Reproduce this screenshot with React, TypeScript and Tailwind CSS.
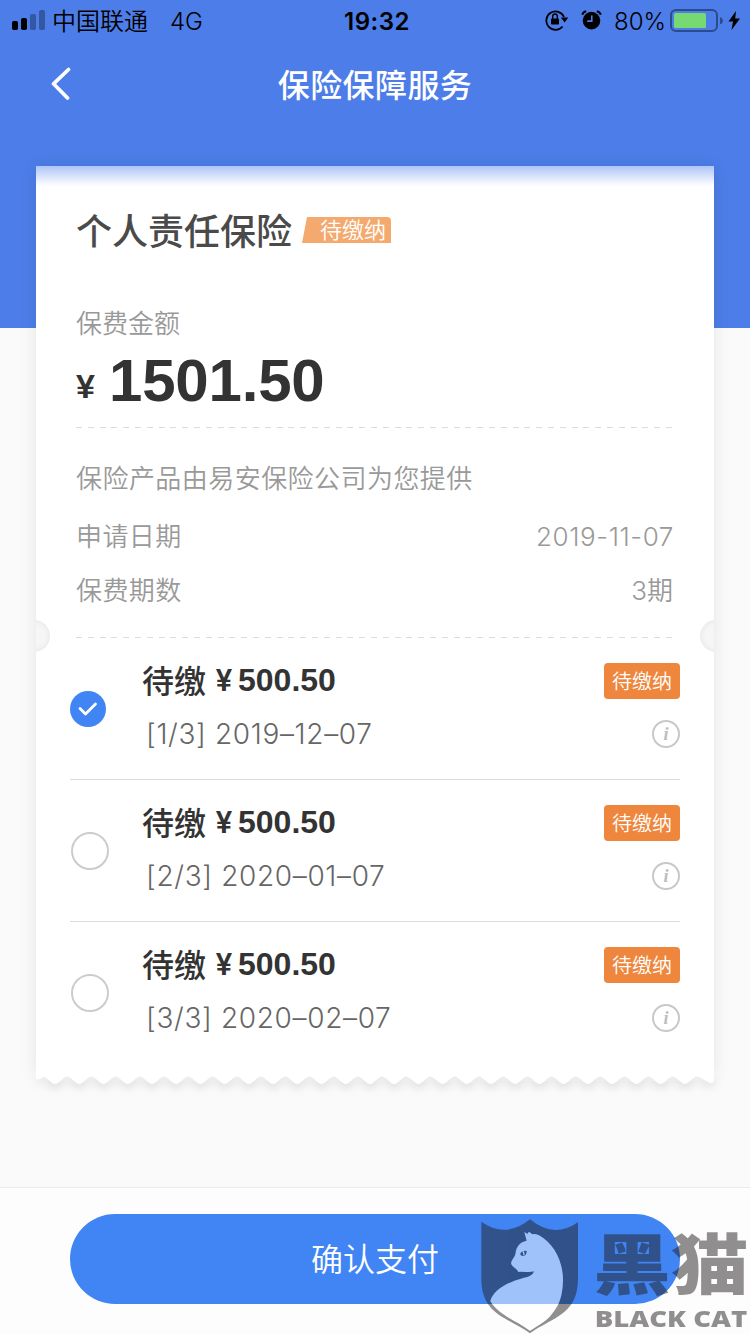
import { useState } from "react";

type Period = {
    id: number;
    date: string;
    amount: string;
};

const periods: Period[] = [
    { id: 1, date: "2019–12–07", amount: "500.50" },
    { id: 2, date: "2020–01–07", amount: "500.50" },
    { id: 3, date: "2020–02–07", amount: "500.50" },
];

function StatusBar() {
    return (
        <div className="flex h-10 items-center pl-3 pr-[8px] text-[24px] leading-10 text-black">
            <svg width="34" height="20" viewBox="0 0 34 20">
                <rect x="0" y="11" width="6" height="9" rx="1.8" />
                <rect x="9" y="8" width="6" height="12" rx="1.8" />
                <rect x="18" y="4" width="6" height="16" rx="1.8" opacity=".3" />
                <rect x="27" y="0" width="6" height="20" rx="1.8" opacity=".3" />
            </svg>
            <span className="ml-[6px] w-[97px] pt-[3px] font-[350]">中国联通</span>
            <span className="ml-[21px] w-[174px] pt-[3px] font-[350]">4G</span>
            <span className="w-[66px] whitespace-nowrap pt-[3px] text-center font-semibold tracking-[0.5px]">19:32</span>
            <svg className="ml-[135px] shrink-0" width="24" height="22" viewBox="0 0 24 22">
                <path d="M17.6 17.5A9.2 9.2 0 1 1 19 8" fill="none" stroke="#000" strokeWidth="1.8" />
                <path d="M15.8 8.6h7.4l-3.5 4.8z" />
                <rect x="6" y="9.5" width="8" height="6" rx=".8" />
                <path d="M7.7 10V7.3a2.3 2.3 0 0 1 4.6 0V10" fill="none" stroke="#000" strokeWidth="1.4" />
            </svg>
            <svg className="ml-[12px] shrink-0" width="22" height="20" viewBox="0 0 22 20">
                <circle cx="10.5" cy="10.6" r="8.8" />
                <path d="M1.3 4.8Q2 1.8 5.2 1.2M15.8 1.2Q19 1.8 19.7 4.8" fill="none" stroke="#000" strokeWidth="2" />
                <path d="M10.8 5.5v5.6H6.2" fill="none" stroke="#4d7de8" strokeWidth="1.6" />
            </svg>
            <span className="ml-[11px] w-[50px] pt-[3px] font-[350]">80%</span>
            <svg className="ml-[6px] shrink-0" width="72" height="24" viewBox="0 0 72 24">
                <rect x="1" y="2" width="46" height="21" rx="5" fill="none" stroke="#2c4a8c" strokeWidth="2" />
                <rect x="4" y="5" width="32" height="15" rx="1.5" fill="#77d972" />
                <path d="M50 9q3 1.200 3 3.700T50 16.500z" fill="#2c4a8c" />
                <path d="M66 3l-7.500 10.500h4.500L61.500 22 70 10.500h-4.800z" />
            </svg>
        </div>
    );
}

function NavBar() {
    return (
        <div className="flex h-[88px] items-center justify-between px-[51px] text-white">
            <svg width="20" height="34" viewBox="0 0 20 34">
                <path d="M17.500 2.500L2.500 16.800 16.500 31" fill="none" stroke="#fff" strokeWidth="3.700" strokeLinecap="round" strokeLinejoin="round" />
            </svg>
            <h1 className="pt-1 text-[32px] font-medium leading-[44px] tracking-[0.4px]">保险保障服务</h1>
            <span className="w-5" />
        </div>
    );
}

function DashedLine() {
    return (
        <div className="h-px w-[598px] bg-[repeating-linear-gradient(90deg,#dcdcdc_0_6px,transparent_6px_11.8px)]" />
    );
}

function Notch({ side }: { side: "left" | "right" }) {
    return (
        <div className={`absolute top-[454px] h-8 w-[14px] overflow-hidden ${side === "left" ? "left-0" : "right-0"}`}>
            <div className={`h-8 w-8 rounded-full bg-[#f6f6f6] shadow-[inset_0_0_6px_rgba(0,0,0,0.08)] ${side === "left" ? "-ml-[18px]" : ""}`} />
        </div>
    );
}

// torn edge along the bottom of the ticket
function TornEdge() {
    const step = 12.11;
    let d = "M0 0V3Q3 4 7 1";
    for (let i = 0; i < 54; i++) {
        const x = 7 + i * step;
        const from = i % 2 === 0 ? 0.5 : 8;
        const to = i % 2 === 0 ? 8 : 0.5;
        d += `C${x + 3.5} ${from} ${x + step - 3.5} ${to} ${x + step} ${to}`;
    }
    d += "C666 1 671 7 675 7Q678 7 678 3V0Z";
    return (
        <svg className="block overflow-visible drop-shadow-[0_4px_5px_rgba(0,0,0,0.13)] [clip-path:inset(0_-20px_-30px_-20px)]" width="678" height="10" viewBox="0 0 678 10">
            <path d={d} fill="#fff" />
        </svg>
    );
}

function InfoIcon() {
    return (
        <span className="flex h-7 w-7 items-center justify-center rounded-full border-2 border-[#c8c8c8] pb-px font-['Liberation_Serif',serif] text-[18px] font-bold italic leading-6 text-[#bdbdbd]">
            i
        </span>
    );
}

function Radio({ checked }: { checked: boolean }) {
    if (!checked) {
        return <span className="ml-px h-[38px] w-[38px] rounded-full border-2 border-[#ccc]" />;
    }
    return (
        <span className="flex h-9 w-9 items-center justify-center rounded-full bg-[#4185f4]">
            <svg width="20" height="16" viewBox="0 0 20 16">
                <path d="M2 7.500L7.500 13 17.500 3" fill="none" stroke="#fff" strokeWidth="2.800" strokeLinecap="round" strokeLinejoin="round" />
            </svg>
        </span>
    );
}

function PeriodRow({ period, checked, onSelect }: { period: Period; checked: boolean; onSelect: () => void }) {
    return (
        <li className="flex h-[142px] items-center border-b border-[#dcdcdc] last:border-b-0" onClick={onSelect}>
            <div className="flex w-[72px]">
                <Radio checked={checked} />
            </div>
            <div className="flex h-full flex-1 flex-col pt-5">
                <p className="flex h-11 items-center text-[32px] font-medium leading-[44px] text-[#333]">
                    <span className="pt-[3px]">待缴</span>
                    <span className="ml-[4px] w-[28px] text-center text-[30px] font-semibold">¥</span>
                    <span className="font-['Liberation_Sans',sans-serif] font-bold">{period.amount}</span>
                </p>
                <p className="ml-[4px] mt-[14px] text-[28px] font-light leading-9 tracking-[0.65px] text-[#666]">
                    [{period.id}/3] {period.date}
                </p>
            </div>
            <div className="flex h-full flex-col items-end pt-[25px]">
                <span className="h-9 w-[76px] rounded bg-[#ee873d] pt-px text-center text-[20px] font-[350] leading-9 text-white">待缴纳</span>
                <div className="mt-[21px]">
                    <InfoIcon />
                </div>
            </div>
        </li>
    );
}

function BlackCatMark() {
    return (
        <svg className="absolute bottom-0 left-[470px]" width="280" height="134" viewBox="0 0 840 402">
            <g fill="#201c1c" opacity=".49">
                <path
                    fillRule="evenodd"
                    d="M34 65Q107 117 180 58Q251 117 324 67V235C324 345 250 350 180 400C110 350 34 345 34 235ZM163 96L170 122C150 126 139 140 137 158C135 174 121 181 124 193C128 202 141 206 145 216C164 214 175 219 192 214C189 228 170 232 153 236C112 247 68 272 61 304C88 346 137 361 180 392C210 373 233 360 246 341C269 315 278 285 279 240C279 178 247 128 207 106Q193 100 187 103L177 95L172 102Z"
                />
                <text x="370" y="267" fontSize="198" fontWeight="900" textLength="466" lengthAdjust="spacingAndGlyphs" fontFamily="'Noto Sans CJK SC', sans-serif">黑猫</text>
                <text x="374" y="380" fontSize="70" fontWeight="800" textLength="458" lengthAdjust="spacingAndGlyphs" fontFamily="'Open Sans', sans-serif">BLACK CAT</text>
            </g>
            <path
                fill="#fff"
                opacity=".5"
                d="M163 96L170 122C150 126 139 140 137 158C135 174 121 181 124 193C128 202 141 206 145 216C164 214 175 219 192 214C189 228 170 232 153 236C112 247 68 272 61 304C88 346 137 361 180 392C210 373 233 360 246 341C269 315 278 285 279 240C279 178 247 128 207 106Q193 100 187 103L177 95L172 102Z"
            />
            <path d="M151 160Q158 149 170 153Q170 166 160 168Q150 168 151 160Z" fill="#32508a" />
            <path d="M158 154q6 5 3 12" fill="none" stroke="#a0c1f9" strokeWidth="4" />
        </svg>
    );
}

export default function App() {
    const [selected, setSelected] = useState(1);

    return (
        <div className="flex h-[1334px] w-[750px] flex-col overflow-hidden bg-[#fafafa] font-['Inter','Noto_Sans_CJK_SC',sans-serif]">
            <header className="h-[328px] shrink-0 bg-[#4d7de8]">
                <StatusBar />
                <NavBar />
            </header>

            <main className="relative mx-9 -mt-[162px]">
                <section className="h-[910px] bg-white shadow-[0_0_16px_rgba(0,0,0,0.09)]">
                    <div className="h-5 bg-linear-to-b from-[#afc5f6] to-white" />
                    <div className="flex h-[90px] items-center pl-[40px]">
                        <h2 className="pt-[2px] text-[36px] font-medium leading-[50px] text-[#4a4a4a]">个人责任保险</h2>
                        <span className="-mt-[2px] ml-[10px] h-[26px] w-[89px] rounded-t bg-[#f4a96e] pl-[18px] text-[22px] font-[350] leading-[26px] text-white [clip-path:polygon(5px_0,100%_0,100%_100%,0_100%)]">待缴纳</span>
                    </div>
                    <div className="pl-[40px]">
                        <p className="mt-[30px] text-[26px] font-[350] leading-9 text-[#999]">保费金额</p>
                        <p className="mt-[4px] flex h-[70px] items-baseline font-['Liberation_Sans',sans-serif] font-bold leading-[70px] text-[#333]">
                            <span className="relative -top-[3px] w-[33px] text-[34px]">¥</span>
                            <span className="text-[60px] tracking-[-0.2px]">1501.50</span>
                        </p>
                        <div className="mt-[11px]">
                            <DashedLine />
                        </div>
                        <div className="pr-[41px] text-[26px] font-[350] leading-9 text-[#999]">
                            <p className="mt-[33px] tracking-[0.45px]">保险产品由易安保险公司为您提供</p>
                            <div className="mt-[22px] flex justify-between">
                                <span className="tracking-[0.4px]">申请日期</span>
                                <span className="-mr-px tracking-[0.6px]">2019-11-07</span>
                            </div>
                            <div className="mt-[18px] flex justify-between">
                                <span className="tracking-[0.4px]">保费期数</span>
                                <span>3期</span>
                            </div>
                        </div>
                        <div className="mt-[28px]">
                            <DashedLine />
                        </div>
                    </div>
                    <ul className="mx-[34px]">
                        {periods.map((period) => (
                            <PeriodRow key={period.id} period={period} checked={selected === period.id} onSelect={() => setSelected(period.id)} />
                        ))}
                    </ul>
                </section>
                <TornEdge />
                <Notch side="left" />
                <Notch side="right" />
            </main>

            <footer className="relative mt-auto h-[147px] shrink-0 border-t border-[#ebebeb] bg-[#fdfdfd] pl-[70px] pt-[26px]">
                <button className="h-[90px] w-[610px] rounded-full bg-[#4185f5] pt-[2px] text-[32px] font-[350] text-white">确认支付</button>
                <BlackCatMark />
            </footer>
        </div>
    );
}
